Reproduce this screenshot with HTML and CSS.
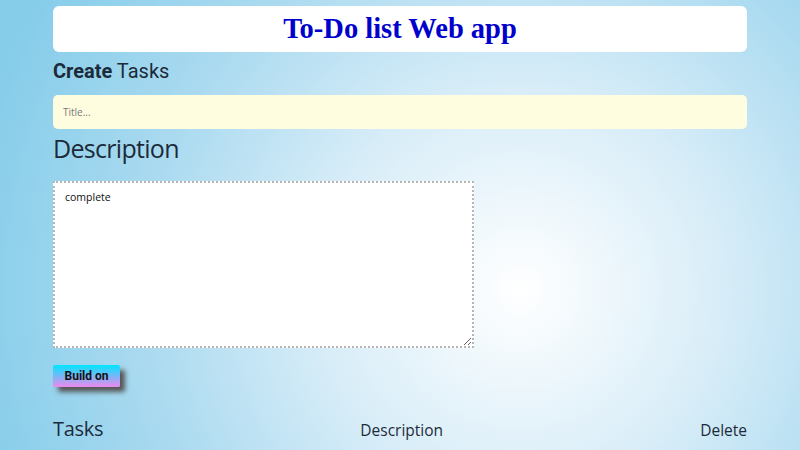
FILE: index.html
```html
<!DOCTYPE html>
<html>
<head>
<meta charset="utf-8">
<link rel="stylesheet" href="styles.css">
</head>
<body>
<div class="container">
  <header class="title-box"><h1>To-Do list Web app</h1></header>
  <h2 class="create"><b>Create</b> Tasks</h2>
  <input class="title-input" type="text" placeholder="Title...">
  <h2 class="desc-label">Description</h2>
  <textarea class="desc-input">complete</textarea>
  <div class="btn-row"><button class="build">Build on</button></div>
  <div class="list-head">
    <span class="lh-tasks">Tasks</span>
    <span class="lh-desc">Description</span>
    <span class="lh-del">Delete</span>
  </div>
</div>
</body>
</html>
```
FILE: styles.css
```css
html, body {
  margin: 0;
  height: 100%;
}
body {
  background: radial-gradient(circle at 520px 290px, #ffffff 0px, #d8edf8 200px, #aadaf0 380px, #86cdea 560px);
  font-family: "Noto Sans", sans-serif;
  color: #1c2b39;
  overflow: hidden;
}
.container {
  width: 694px;
  margin: 0 auto;
  padding-top: 6px;
}
.title-box {
  background: #fff;
  border-radius: 6px;
  height: 46px;
  display: flex;
  align-items: center;
  justify-content: center;
}
.title-box h1 {
  margin: 0;
  font-family: "Liberation Serif", serif;
  font-weight: bold;
  font-size: 28.5px;
  color: #0000cd;
}
.create {
  margin: 6px 0 0;
  font-family: Roboto, sans-serif;
  font-weight: normal;
  font-size: 20px;
  line-height: 26px;
  color: #1c2b39;
}
.create b { font-weight: bold; }
.title-input {
  display: block;
  box-sizing: border-box;
  width: 100%;
  height: 34px;
  margin-top: 11px;
  border: none;
  border-radius: 5px;
  background: #fffde0;
  padding: 0 10px;
  font-family: "Open Sans", sans-serif;
  font-size: 10px;
  outline: none;
}
.title-input::placeholder { color: #777; }
.desc-label {
  margin: 1px 0 0;
  font-family: "Open Sans", sans-serif;
  font-weight: normal;
  font-size: 25px;
  letter-spacing: -0.7px;
  line-height: 36px;
  color: #1c2b39;
}
.desc-input {
  display: block;
  box-sizing: border-box;
  width: 421px;
  height: 167px;
  margin-top: 15px;
  border: 2px dotted #b5b5b5;
  background: #fff;
  padding: 7px 10px;
  font-family: "Open Sans", sans-serif;
  font-size: 10.5px;
  color: #111;
  resize: both;
  outline: none;
}
.btn-row {
  margin-top: 17px;
  display: flex;
}
.build {
  display: block;
  width: 67px;
  height: 22px;
  border: none;
  border-radius: 2px;
  background: linear-gradient(#00e6ff, #ee88ee);
  box-shadow: 5px 5px 5px #555;
  font-family: Roboto, sans-serif;
  font-weight: bold;
  font-size: 12px;
  color: #111;
  padding: 0 0 1px;
}
.list-head {
  margin-top: 28px;
  display: flex;
  justify-content: space-between;
  align-items: baseline;
  font-family: "Open Sans", sans-serif;
}
.lh-tasks { font-size: 20px; letter-spacing: -0.3px; }
.lh-desc { font-size: 15.5px; }
.lh-del { font-size: 15.5px; }
```
